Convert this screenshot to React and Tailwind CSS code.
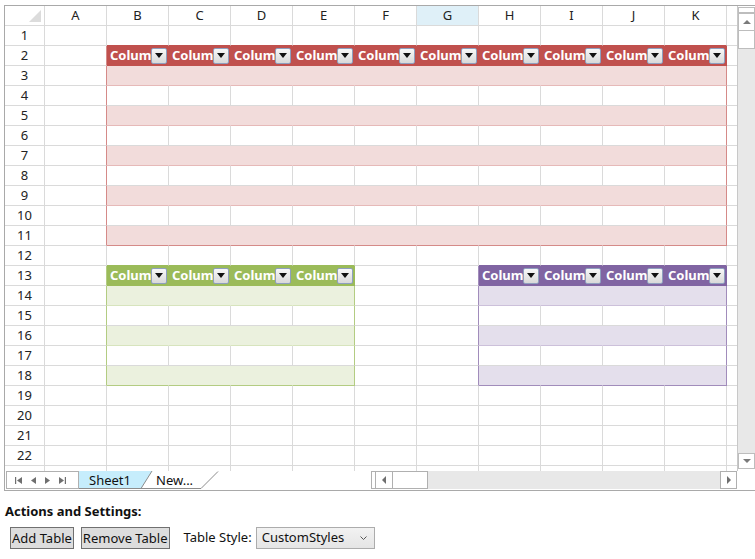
import React from 'react';

const COLS = ['A', 'B', 'C', 'D', 'E', 'F', 'G', 'H', 'I', 'J', 'K'];
const ROWS = Array.from({ length: 23 }, (_, i) => i + 1);

const TABLES = [
  {
    r1: 2, r2: 11, c1: 1, c2: 10,
    headBg: 'bg-[#c0504d]', headR: 'border-r-[#c0504d]', headB: 'border-b-[#c0504d]',
    bandBg: 'bg-[#f2dcdb]', bandR: 'border-r-[#f2dcdb]', bandB: 'border-b-[#e6b9b8]',
    edgeR: 'border-r-[#d58a88]', edgeB: 'border-b-[#d58a88]',
  },
  {
    r1: 13, r2: 18, c1: 1, c2: 4,
    headBg: 'bg-[#9bbb59]', headR: 'border-r-[#9bbb59]', headB: 'border-b-[#9bbb59]',
    bandBg: 'bg-[#ebf1de]', bandR: 'border-r-[#ebf1de]', bandB: 'border-b-[#d7e4bd]',
    edgeR: 'border-r-[#b3cc82]', edgeB: 'border-b-[#b3cc82]',
  },
  {
    r1: 13, r2: 18, c1: 7, c2: 10,
    headBg: 'bg-[#8064a2]', headR: 'border-r-[#8064a2]', headB: 'border-b-[#8064a2]',
    bandBg: 'bg-[#e4dfec]', bandR: 'border-r-[#e4dfec]', bandB: 'border-b-[#ccc0da]',
    edgeR: 'border-r-[#a18cbb]', edgeB: 'border-b-[#a18cbb]',
  },
];

const GRID_R = 'border-r-[#dadada]';
const GRID_B = 'border-b-[#dadada]';

function cellStyle(row, col) {
  let bg = '';
  let right = GRID_R;
  let bottom = GRID_B;
  let header = null;

  for (const t of TABLES) {
    const inRows = row >= t.r1 && row <= t.r2;
    const inCols = col >= t.c1 && col <= t.c2;
    if (inRows && col === t.c1 - 1) right = t.edgeR;
    if (row === t.r1 - 1 && inCols) bottom = t.headB;
    if (inRows && inCols) {
      if (row === t.r1) {
        bg = t.headBg;
        right = t.headR;
        bottom = t.headB;
        header = t;
      } else if ((row - t.r1) % 2 === 1) {
        bg = t.bandBg;
        right = col === t.c2 ? t.edgeR : t.bandR;
        bottom = row === t.r2 ? t.edgeB : t.bandB;
      } else {
        right = col === t.c2 ? t.edgeR : GRID_R;
        bottom = row === t.r2 ? t.edgeB : GRID_B;
      }
    }
  }
  return { bg, right, bottom, header };
}

function DropButton() {
  return (
    <div className="w-[16px] h-[16px] shrink-0 mr-[1px] rounded-[2px] border border-[#8e9fbf] bg-gradient-to-b from-[#f8f8f8] to-[#d9d9d9] flex items-center justify-center">
      <svg width="8" height="5" viewBox="0 0 8 5">
        <polygon points="0,0 8,0 4,5" fill="#111" />
      </svg>
    </div>
  );
}

function Cell({ row, col }) {
  const { bg, right, bottom, header } = cellStyle(row, col);
  return (
    <div className={`w-[62px] h-[20px] shrink-0 border-r border-b ${right} ${bottom} ${bg} flex items-center`}>
      {header && (
        <>
          <span className="flex-1 overflow-hidden whitespace-nowrap pl-[3px] text-white font-bold text-[13px] leading-none">
            Column
          </span>
          <DropButton />
        </>
      )}
    </div>
  );
}

function VScroll() {
  return (
    <div className="w-[18px] shrink-0 border-l border-l-[#c8c8c8] flex flex-col bg-white">
      <div className="h-[6px] mt-[1px] border border-[#bdbdbd]" />
      <div className="h-[18px] border border-[#bdbdbd] flex items-center justify-center">
        <svg width="8" height="4" viewBox="0 0 8 4"><polygon points="0,4 8,4 4,0" fill="#7a7a7a" /></svg>
      </div>
      <div className="h-[18px] border border-t-0 border-[#bdbdbd] bg-white" />
      <div className="flex-1 bg-[#e8e8e8]" />
      <div className="h-[16px] mb-[2px] border border-[#bdbdbd] bg-white flex items-center justify-center">
        <svg width="8" height="4" viewBox="0 0 8 4"><polygon points="0,0 8,0 4,4" fill="#7a7a7a" /></svg>
      </div>
    </div>
  );
}

function Grid() {
  return (
    <div className="w-[732px] h-[465px] overflow-hidden shrink-0">
      <div className="flex h-[20px]">
        <div className="w-[40px] h-[20px] shrink-0 border-r border-b border-r-[#dadada] border-b-[#dadada] relative">
          <svg className="absolute right-[3px] bottom-[3px]" width="12" height="12" viewBox="0 0 12 12">
            <polygon points="12,0 12,12 0,12" fill="#dcdcdc" />
          </svg>
        </div>
        {COLS.map((c) => (
          <div
            key={c}
            className={`w-[62px] h-[20px] shrink-0 border-r border-b border-r-[#dadada] border-b-[#dadada] flex items-center justify-center text-[13px] text-[#222] ${c === 'G' ? 'bg-[#dff0f8]' : ''}`}
          >
            {c}
          </div>
        ))}
        <div className="w-[10px] h-[20px] shrink-0 border-b border-b-[#dadada]" />
      </div>
      {ROWS.map((r) => (
        <div key={r} className="flex h-[20px]">
          <div className="w-[40px] h-[20px] shrink-0 border-r border-b border-r-[#dadada] border-b-[#dadada] flex items-center justify-center text-[13px] text-[#222]">
            {r}
          </div>
          {COLS.map((c, ci) => (
            <Cell key={c} row={r} col={ci} />
          ))}
          <div className="w-[10px] h-[20px] shrink-0 border-b border-b-[#dadada]" />
        </div>
      ))}
    </div>
  );
}

function TabBar() {
  return (
    <div className="flex h-[19px] items-start">
      <div className="ml-[1px] w-[73px] h-[18px] border border-[#b0b0b0] bg-white flex items-center gap-[9px] pl-[8px]">
        <svg width="7" height="7" viewBox="0 0 7 7"><rect x="0" y="0" width="1.2" height="7" fill="#6f6f6f" /><polygon points="7,0 7,7 2,3.5" fill="#6f6f6f" /></svg>
        <svg width="5" height="7" viewBox="0 0 5 7"><polygon points="5,0 5,7 0,3.5" fill="#6f6f6f" /></svg>
        <svg width="5" height="7" viewBox="0 0 5 7"><polygon points="0,0 0,7 5,3.5" fill="#6f6f6f" /></svg>
        <svg width="7" height="7" viewBox="0 0 7 7"><polygon points="0,0 0,7 5,3.5" fill="#6f6f6f" /><rect x="5.8" y="0" width="1.2" height="7" fill="#6f6f6f" /></svg>
      </div>
      <div className="relative w-[142px] h-[18px] shrink-0">
        <svg className="absolute inset-0" width="142" height="18" viewBox="0 0 142 18">
          <polygon points="130,0.5 139,0.5 122,17.5 62,17.5 72,0.5" fill="#fff" />
          <polygon points="0,0 73,0 62,18 0,18" fill="#c6edfc" />
          <polyline points="62,17.5 122,17.5 139,0.5" fill="none" stroke="#8c8c8c" strokeWidth="1" />
          <line x1="62" y1="17.5" x2="73" y2="0" stroke="#8c8c8c" strokeWidth="1" />
          <line x1="0" y1="17.5" x2="62" y2="17.5" stroke="#8c8c8c" strokeWidth="1" />
        </svg>
        <span className="absolute left-[10px] top-[1px] text-[13px] leading-[16px] text-[#111]">Sheet1</span>
        <span className="absolute left-[77px] top-[1px] text-[13px] leading-[16px] text-[#111]">New...</span>
      </div>
      <div className="w-[150px] shrink-0" />
      <div className="flex h-[18px] w-[366px] shrink-0">
        <div className="w-[5px] border border-[#b0b0b0]" />
        <div className="w-[17px] border border-l-0 border-[#b0b0b0] bg-white flex items-center justify-center">
          <svg width="4" height="8" viewBox="0 0 4 8"><polygon points="4,0 4,8 0,4" fill="#6f6f6f" /></svg>
        </div>
        <div className="w-[35px] border border-l-0 border-[#b0b0b0] bg-white" />
        <div className="flex-1 bg-[#e8e8e8] border-y border-[#e8e8e8]" />
        <div className="w-[17px] border border-[#b0b0b0] bg-white flex items-center justify-center">
          <svg width="4" height="8" viewBox="0 0 4 8"><polygon points="0,0 0,8 4,4" fill="#6f6f6f" /></svg>
        </div>
      </div>
    </div>
  );
}

export default function App() {
  return (
    <div className="w-[755px] h-[559px] overflow-hidden bg-white text-[#111]" style={{ fontFamily: '"Noto Sans", "Open Sans", sans-serif' }}>
      <div className="mt-[5px] ml-[4px] w-[751px] border-l border-t border-b border-[#a9a9a9]">
        <div className="flex">
          <Grid />
          <VScroll />
        </div>
        <TabBar />
      </div>
      <div className="pl-[5px] pt-[11px]">
        <div className="text-[13px] font-bold leading-[18px]">Actions and Settings:</div>
        <div className="flex items-center mt-[7px] pl-[5px]">
          <button className="h-[22px] px-[1px] border border-[#707070] bg-[#dddddd] text-[13px] leading-none">Add Table</button>
          <button className="h-[22px] ml-[7px] px-[1px] border border-[#707070] bg-[#dddddd] text-[13px] leading-none">Remove Table</button>
          <span className="ml-[14px] text-[13px]">Table Style:</span>
          <div className="ml-[4px] w-[119px] h-[22px] border border-[#acacac] bg-gradient-to-b from-[#f2f2f2] to-[#e5e5e5] flex items-center justify-between pl-[5px] pr-[7px]">
            <span className="text-[13px]">CustomStyles</span>
            <svg width="7" height="4" viewBox="0 0 7 4"><polyline points="0.5,0.5 3.5,3.5 6.5,0.5" fill="none" stroke="#555" strokeWidth="1" /></svg>
          </div>
        </div>
      </div>
    </div>
  );
}
